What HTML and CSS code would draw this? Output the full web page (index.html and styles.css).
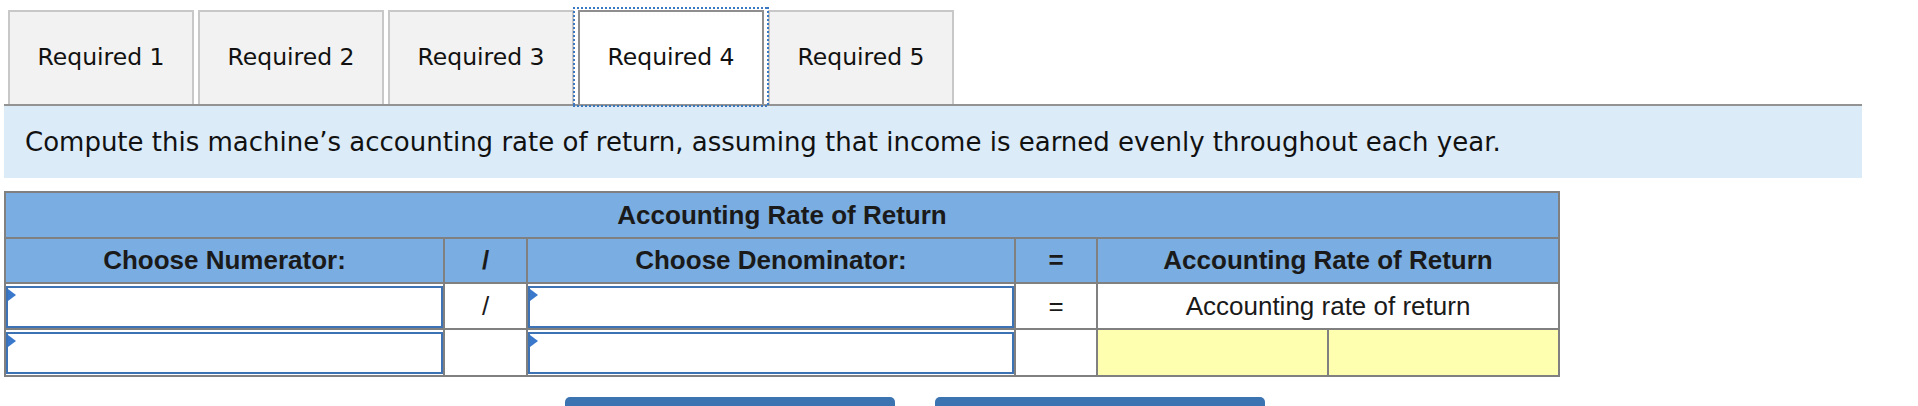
FILE: index.html
```html
<!DOCTYPE html>
<html lang="en">
<head>
<meta charset="utf-8">
<title>Accounting Rate of Return</title>
<link rel="stylesheet" href="styles.css">
</head>
<body>
<div class="wrap">
  <div class="tabs">
    <div class="tab">Required 1</div>
    <div class="tab">Required 2</div>
    <div class="tab">Required 3</div>
    <div class="tab active">Required 4</div>
    <div class="tab">Required 5</div>
  </div>
  <div class="panel">Compute this machine’s accounting rate of return, assuming that income is earned evenly throughout each year.</div>
</div>
<table class="grid">
  <colgroup>
    <col class="c-num"><col class="c-op"><col class="c-den"><col class="c-eq"><col class="c-r1"><col class="c-r2">
  </colgroup>
  <tr class="r-title"><th colspan="6">Accounting Rate of Return</th></tr>
  <tr class="r-head"><th>Choose Numerator:</th><th>/</th><th>Choose Denominator:</th><th>=</th><th colspan="2">Accounting Rate of Return</th></tr>
  <tr class="r-a"><td class="sel"><div class="box"></div></td><td>/</td><td class="sel"><div class="box"></div></td><td>=</td><td colspan="2">Accounting rate of return</td></tr>
  <tr class="r-b"><td class="sel"><div class="box"></div></td><td></td><td class="sel"><div class="box"></div></td><td></td><td class="ans"></td><td class="ans"></td></tr>
</table>
<div class="nav">
  <button class="btn" aria-label="Required 3"></button>
  <button class="btn" aria-label="Required 5"></button>
</div>
</body>
</html>
```
FILE: styles.css
```css
html, body {
  margin: 0;
  padding: 0;
  overflow: hidden;
  background: #ffffff;
}
body {
  font-family: "DejaVu Sans", Verdana, sans-serif;
  color: #111111;
}
.wrap {
  margin-left: 4px;
  width: 1858px;
}
.tabs {
  display: flex;
  gap: 4px;
  padding: 10px 0 0 4px;
  height: 94px;
}
.tab {
  box-sizing: border-box;
  width: 186px;
  height: 94px;
  border: 2px solid #c8c8c8;
  border-bottom: none;
  background: #f2f2f2;
  display: flex;
  align-items: center;
  justify-content: center;
  font-size: 23.5px;
  padding-bottom: 2px;
}
.tab.active {
  background: #ffffff;
  border-color: #8e8e8e;
  position: relative;
  z-index: 1;
}
.tab.active::after {
  content: "";
  position: absolute;
  left: -7px;
  right: -7px;
  top: -5px;
  bottom: -3px;
  pointer-events: none;
  background:
    repeating-linear-gradient(90deg, #3b78c0 0 2px, transparent 2px 4px) left top / 100% 2px no-repeat,
    repeating-linear-gradient(90deg, #3b78c0 0 2px, transparent 2px 4px) left bottom / 100% 2px no-repeat,
    repeating-linear-gradient(180deg, #3b78c0 0 2px, transparent 2px 4px) left top / 2px 100% no-repeat,
    repeating-linear-gradient(180deg, #3b78c0 0 2px, transparent 2px 4px) right top / 2px 100% no-repeat;
}
.panel {
  border-top: 2px solid #939393;
  background: #dbebf8;
  height: 72px;
  display: flex;
  align-items: center;
  padding-left: 21px;
  font-size: 26px;
}
.grid {
  margin: 13px 0 0 4px;
  border-collapse: collapse;
  table-layout: fixed;
  width: 1554px;
  font-family: "Liberation Sans", Arial, sans-serif;
  font-size: 26px;
  color: #1a1a1a;
}
.c-num { width: 439px; }
.c-op { width: 83px; }
.c-den { width: 488px; }
.c-eq { width: 82px; }
.c-r1 { width: 231px; }
.c-r2 { width: 231px; }
.grid th, .grid td {
  border: 2px solid #808080;
  padding: 0;
  text-align: center;
  vertical-align: middle;
}
.grid th {
  background: #7aade1;
  font-weight: bold;
}
.r-title { height: 46px; }
.r-head { height: 45px; }
.r-a { height: 46px; }
.r-b { height: 47px; }
.grid td.sel {
  padding: 1px 0 0 0;
}
.box {
  position: relative;
  box-sizing: border-box;
  height: 42px;
  border: 2px solid #3d72b4;
  background: #ffffff;
}
.box::before {
  content: "";
  position: absolute;
  left: 0;
  top: 1px;
  border-top: 6px solid transparent;
  border-bottom: 6px solid transparent;
  border-left: 8px solid #3a78cc;
}
.grid td.ans {
  background: #ffffb0;
}
.nav {
  display: flex;
  gap: 40px;
  margin: 20px 0 0 565px;
}
.btn {
  width: 330px;
  height: 50px;
  border: none;
  border-radius: 5px 5px 0 0;
  background: #3c74b2;
  padding: 0;
}
```
